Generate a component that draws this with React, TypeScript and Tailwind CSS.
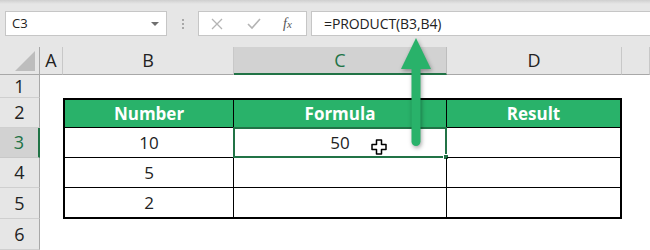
import { Fragment } from 'react';

type Cell = { text?: string; bold?: boolean };

const rows: { num: number; h: string; cells: Cell[] }[] = [
  { num: 1, h: 'h-[23px]', cells: [{}, {}, {}] },
  {
    num: 2,
    h: 'h-[30px]',
    cells: [
      { text: 'Number', bold: true },
      { text: 'Formula', bold: true },
      { text: 'Result', bold: true },
    ],
  },
  { num: 3, h: 'h-[30px]', cells: [{ text: '10' }, { text: '50' }, {}] },
  { num: 4, h: 'h-[30px]', cells: [{ text: '5' }, {}, {}] },
  { num: 5, h: 'h-[31px]', cells: [{ text: '2' }, {}, {}] },
  { num: 6, h: 'h-[31px]', cells: [{}, {}, {}] },
];

function tableCellClass(row: number, col: number) {
  // rows 2..5 and cols B..D form the bordered table
  if (row < 2 || row > 5) return '';
  let c = 'border-black border-b';
  if (row === 2) c += ' border-t-2 bg-[#29b26a] text-white';
  if (row === 5) c += ' border-b-2';
  if (col === 0) c += ' border-l-2';
  if (col === 2) c += ' border-r-2';
  else c += ' border-r';
  return c;
}

function Arrow() {
  return (
    <svg
      className="pointer-events-none absolute left-[396px] top-[34px] drop-shadow-[1px_2px_2px_rgba(0,0,0,0.35)]"
      width="40"
      height="116"
      viewBox="0 0 40 116"
    >
      <rect x="15.5" y="30" width="9" height="82" rx="4.5" fill="#29b26a" />
      <polygon points="20,4 5,35 35,35" fill="#29b26a" />
    </svg>
  );
}

function PlusCursor() {
  return (
    <svg
      className="pointer-events-none absolute left-[371px] top-[139px]"
      width="17"
      height="17"
      viewBox="0 0 17 17"
    >
      <polygon
        points="5.5,1 10.5,1 10.5,5.5 15,5.5 15,10.5 10.5,10.5 10.5,15 5.5,15 5.5,10.5 1,10.5 1,5.5 5.5,5.5"
        fill="white"
        stroke="black"
        strokeWidth="1.5"
        strokeLinejoin="round"
      />
    </svg>
  );
}

export default function App() {
  return (
    <div className="relative h-[250px] w-[650px] overflow-hidden bg-white font-['Open_Sans',sans-serif]">
      {/* formula bar strip */}
      <div className="flex h-[47px] items-start bg-[linear-gradient(#cfcfcf,#e6e6e6_4px)] pt-[11px]">
        <div className="ml-[5px] flex h-[25px] w-[162px] items-center justify-between border border-[#c6c6c6] bg-white pl-[6px] pr-[7px] text-[13px] text-[#222]">
          <span>C3</span>
          <span className="h-0 w-0 border-x-[4px] border-t-[4px] border-x-transparent border-t-[#6f6f6f]" />
        </div>
        <div className="flex w-[31px] flex-col items-center gap-[2px] pt-[8px]">
          <span className="h-[2px] w-[2px] bg-[#a8a8a8]" />
          <span className="h-[2px] w-[2px] bg-[#a8a8a8]" />
          <span className="h-[2px] w-[2px] bg-[#a8a8a8]" />
        </div>
        <div className="flex h-[25px] w-[109px] items-center border border-[#c6c6c6] bg-white">
          <svg className="ml-[12px]" width="12" height="12" viewBox="0 0 12 12">
            <path d="M1 1L11 11M11 1L1 11" stroke="#b4b4b4" strokeWidth="1.3" />
          </svg>
          <svg className="ml-[24px]" width="14" height="12" viewBox="0 0 14 12">
            <path d="M1 6L5 10L13 1" stroke="#b4b4b4" strokeWidth="1.6" fill="none" />
          </svg>
          <span className="ml-[22px] font-['Liberation_Serif',serif] text-[14px] italic text-[#555]">
            f<span className="text-[11px]">x</span>
          </span>
        </div>
        <div className="ml-[4px] flex h-[25px] flex-1 items-center border-y border-l border-[#c6c6c6] bg-white pl-[12px] text-[14px] tracking-[-0.1px] text-[#222]">
          =PRODUCT(B3,B4)
        </div>
      </div>

      {/* sheet */}
      <div className="grid grid-cols-[40px_23px_171px_213px_175px_1fr] text-[17px] text-[#222]">
        {/* column headers */}
        <div className="relative h-[28px] border-b border-r border-[#a8a8a8] bg-[#e6e6e6]">
          <span className="absolute bottom-[3px] right-[4px] h-0 w-0 border-b-[20px] border-l-[20px] border-b-[#bdbdbd] border-l-transparent" />
        </div>
        {['A', 'B', 'C', 'D', ''].map((l) => (
          <div
            key={l}
            className={
              l === 'C'
                ? 'flex h-[28px] items-center justify-center border-b-2 border-r border-b-[#217346] border-r-[#bdbdbd] bg-[#d2d2d2] text-[18px] text-[#217346]'
                : 'flex h-[28px] items-center justify-center border-b border-r border-b-[#a8a8a8] border-r-[#c8c8c8] bg-[#e6e6e6] text-[18px]'
            }
          >
            {l}
          </div>
        ))}

        {rows.map((r) => (
          <Fragment key={r.num}>
            <div
              className={
                r.num === 3
                  ? `${r.h} flex items-center justify-center border-b border-r-2 border-b-[#c8c8c8] border-r-[#217346] bg-[#d2d2d2] text-[18px] text-[#217346]`
                  : `${r.h} flex items-center justify-center border-b border-r border-b-[#cfcfcf] border-r-[#a8a8a8] bg-[#e6e6e6] text-[18px]`
              }
            >
              {r.num}
            </div>
            <div className={r.h} />
            {r.cells.map((c, i) => (
              <div
                key={i}
                className={`${r.h} relative flex items-center justify-center ${tableCellClass(r.num, i)} ${c.bold ? 'font-bold' : ''}`}
              >
                {c.text}
                {r.num === 3 && i === 1 && (
                  <>
                    <span className="absolute -left-px -top-px bottom-[-1px] right-[-1px] border-2 border-[#217346]" />
                    <span className="absolute -bottom-[3px] -right-[3px] h-[6px] w-[6px] border border-white bg-[#217346]" />
                  </>
                )}
              </div>
            ))}
            <div className={r.h} />
          </Fragment>
        ))}
      </div>

      <Arrow />
      <PlusCursor />
    </div>
  );
}
